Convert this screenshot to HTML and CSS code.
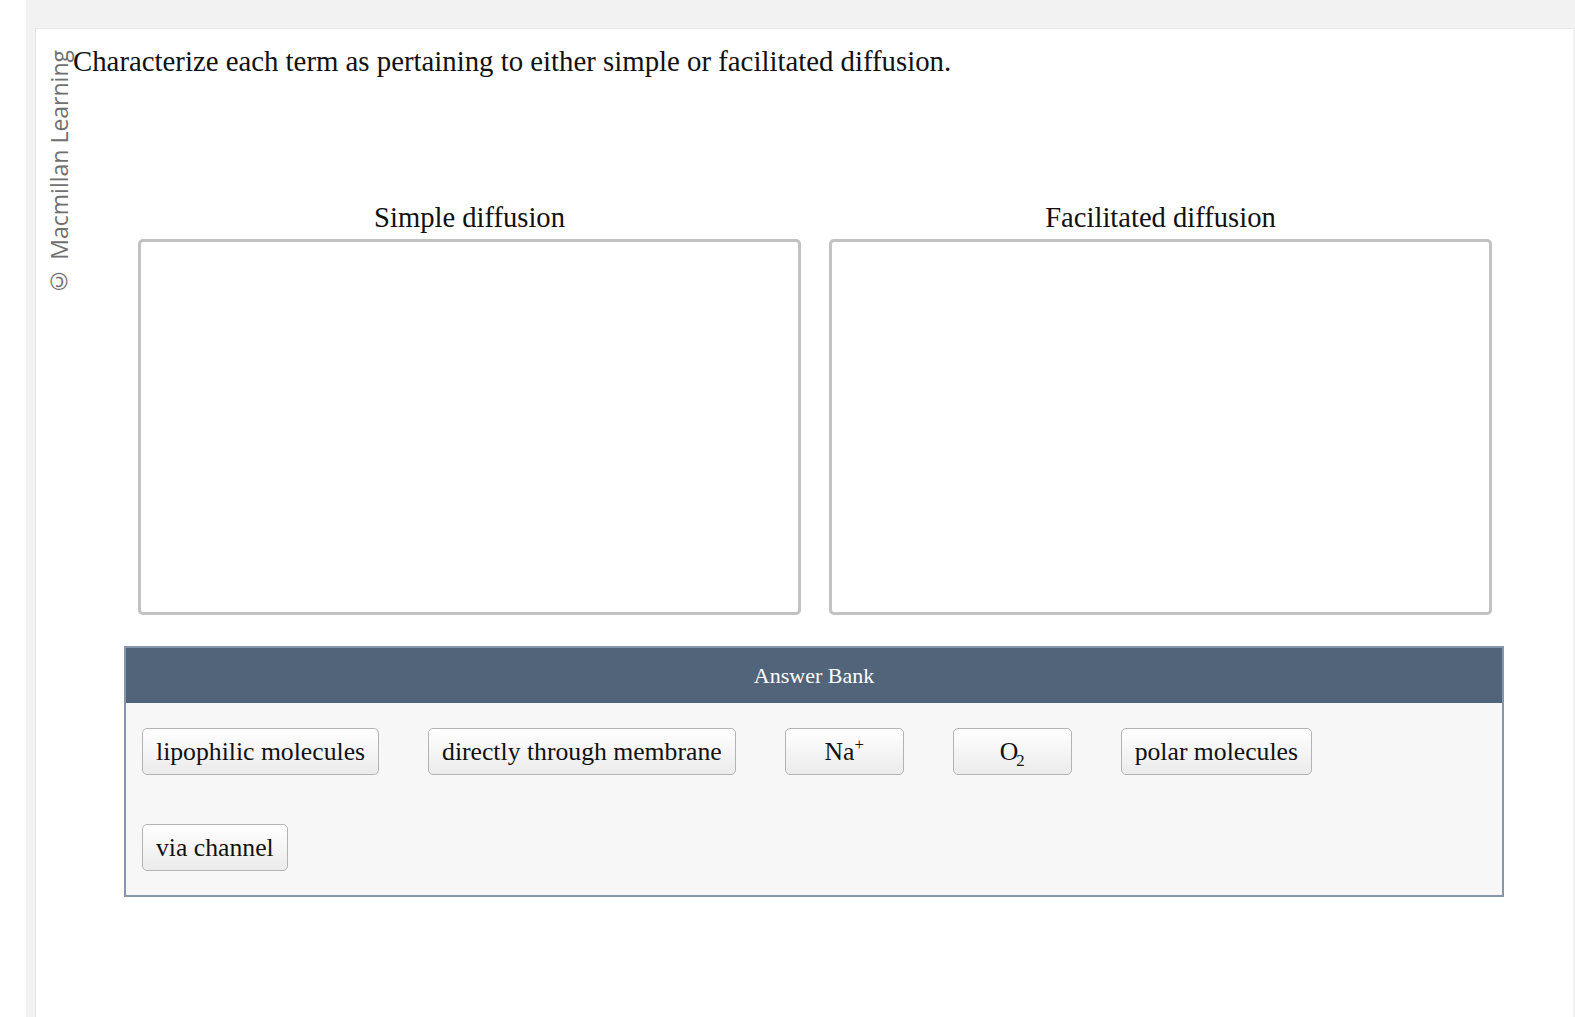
FILE: index.html
```html
<!DOCTYPE html>
<html lang="en">
<head>
    <meta charset="UTF-8">
    <meta name="viewport" content="width=device-width, initial-scale=1.0">
    <title>Simple or Facilitated Diffusion</title>
    <link rel="stylesheet" href="styles.css">
</head>
<body>
    <div class="page">
        <div class="panel">
            <div class="credit">© Macmillan Learning</div>

            <div class="content">
                <p class="question">Characterize each term as pertaining to either simple or facilitated diffusion.</p>

                <div class="bins">
                    <div class="bin">
                        <div class="bin-title">Simple diffusion</div>
                        <div class="bin-box"></div>
                    </div>
                    <div class="bin">
                        <div class="bin-title">Facilitated diffusion</div>
                        <div class="bin-box"></div>
                    </div>
                </div>

                <div class="bank">
                    <div class="bank-header">Answer Bank</div>
                    <div class="bank-items">
                        <span class="chip">lipophilic molecules</span>
                        <span class="chip">directly through membrane</span>
                        <span class="chip short">Na<sup>+</sup></span>
                        <span class="chip short">O<sub>2</sub></span>
                        <span class="chip">polar molecules</span>
                        <span class="chip">via channel</span>
                    </div>
                </div>
            </div>
        </div>
    </div>
</body>
</html>
```

FILE: styles.css
```css
html, body {
    margin: 0;
    padding: 0;
    background: #fff;
}
body {
    font-family: "Liberation Serif", "Times New Roman", serif;
    color: #111;
}
.page {
    margin-left: 26px;
    height: 1017px;
    box-sizing: border-box;
    padding: 28px 2px 0 9px;
    background: #f2f2f2;
}
.panel {
    display: flex;
    height: 100%;
    background: #fff;
    border-top: 1px solid #e9e9e9;
    border-left: 1px solid #e6e6e6;
    box-sizing: border-box;
}
.credit {
    writing-mode: vertical-rl;
    transform: rotate(180deg);
    align-self: flex-start;
    margin: 21px 0 0 9px;
    width: 28px;
    font-family: "Open Sans", "DejaVu Sans", sans-serif;
    font-size: 23px;
    line-height: 28px;
    color: #707070;
    white-space: nowrap;
}
.content {
    flex: 1;
}
.question {
    margin: 13px 0 0 0;
    font-size: 28.8px;
    line-height: 38px;
}
.bins {
    display: flex;
    gap: 28px;
    margin: 121px 0 0 65px;
}
.bin {
    width: 663px;
    flex: none;
}
.bin-title {
    text-align: center;
    font-size: 28.6px;
    line-height: 34px;
    margin-bottom: 4px;
}
.bin-box {
    height: 370px;
    border: 3px solid #c2c2c2;
    border-radius: 5px;
}
.bank {
    width: 1380px;
    margin: 31px 0 0 51px;
    border: 2px solid #8796aa;
    background: #f7f7f7;
    box-sizing: border-box;
}
.bank-header {
    height: 55px;
    line-height: 55px;
    text-align: center;
    background: #526479;
    color: #fff;
    font-size: 22px;
}
.bank-items {
    display: flex;
    flex-wrap: wrap;
    gap: 49px;
    padding: 25px 16px 24px 16px;
}
.chip {
    display: inline-block;
    height: 47px;
    line-height: 45px;
    padding: 0 13px;
    box-sizing: border-box;
    border: 1px solid #b3b3b3;
    border-radius: 5px;
    background: linear-gradient(#ffffff, #ebebeb);
    font-size: 25.7px;
    text-align: center;
    white-space: nowrap;
}
.chip.short {
    min-width: 119px;
}
.chip sup,
.chip sub {
    font-size: 0.65em;
    line-height: 0;
}
.chip sub {
    margin-left: -2px;
}
```
